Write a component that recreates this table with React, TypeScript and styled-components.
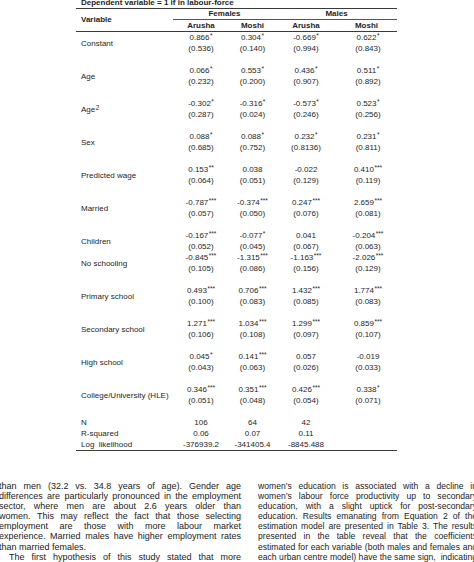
import React from "react";
import styled, { createGlobalStyle } from "styled-components";

const GlobalStyle = createGlobalStyle`
  html, body {
    margin: 0;
    padding: 0;
    background: #ffffff;
    overflow: hidden;
  }
`;

const Page = styled.div`
  width: 474px;
  height: 562px;
  overflow: hidden;
  font-family: "Liberation Sans", Arial, Helvetica, sans-serif;
  color: #262626;
`;

const TableWrap = styled.div`
  margin-left: 76px;
  margin-top: -3px;
  width: 321px;
`;

const Title = styled.div`
  font-size: 8px;
  font-weight: bold;
  line-height: 10px;
  padding-top: 1px;
  padding-left: 5px;
  border-bottom: 1.5px solid #3a3a3a;
  color: #1e1e1e;
`;

const Table = styled.table`
  width: 100%;
  border-collapse: collapse;
  table-layout: fixed;
  font-size: 8px;
`;

const HeadCell = styled.th<{ $left?: boolean; $rule?: "thin" | "thick" }>`
  padding: 0;
  padding-left: ${({ $left }) => ($left ? "5px" : "0")};
  text-align: ${({ $left }) => ($left ? "left" : "center")};
  vertical-align: middle;
  font-weight: bold;
  line-height: 11px;
  color: #1e1e1e;
  border-bottom: ${({ $rule }) =>
    $rule === "thin"
      ? "1px solid #555"
      : $rule === "thick"
      ? "1.5px solid #3a3a3a"
      : "none"};
`;

const GroupRow = styled.tr`
  height: 10px;
  th {
    line-height: 10px;
  }
`;

const Cell = styled.td<{ $left?: boolean; $tight?: boolean; $shift?: number }>`
  padding: 0 0 ${({ $tight }) => ($tight ? "0" : "11px")} 0;
  padding-left: ${({ $left, $shift }) => ($left ? "5px" : `${$shift ?? 0}px`)};
  text-align: ${({ $left }) => ($left ? "left" : "center")};
  vertical-align: middle;
  line-height: 11px;
  white-space: nowrap;
`;

const StatCell = styled.td<{ $left?: boolean; $last?: boolean; $shift?: number }>`
  padding: 0;
  padding-left: ${({ $left, $shift }) => ($left ? "5px" : `${$shift ?? 0}px`)};
  text-align: ${({ $left }) => ($left ? "left" : "center")};
  line-height: 11px;
  white-space: pre;
  border-bottom: ${({ $last }) => ($last ? "1.5px solid #3a3a3a" : "none")};
`;

const Line = styled.span`
  display: block;
  line-height: 11px;
`;

const Star = styled.sup`
  font-size: 6.5px;
  line-height: 0;
  vertical-align: 2px;
  margin-left: 0.5px;
`;

const Columns = styled.div`
  display: flex;
  gap: 17px;
  margin-left: -1px;
  margin-top: 30px;
`;

const Column = styled.div<{ $width: number; $size: number }>`
  width: ${({ $width }) => $width}px;
  flex-shrink: 0;
  font-size: ${({ $size }) => $size}px;
  line-height: 10.1px;
  color: #222;
`;

const TextLine = styled.div<{ $end?: boolean; $indent?: boolean }>`
  white-space: nowrap;
  text-align: justify;
  text-align-last: ${({ $end }) => ($end ? "left" : "justify")};
  text-indent: ${({ $indent }) => ($indent ? "10px" : "0")};
`;

type Coef = [string, string, string];

const rows: { label: React.ReactNode; vals: Coef[]; tight?: boolean }[] = [
  { label: "Constant", vals: [["0.866", "*", "(0.536)"], ["0.304", "*", "(0.140)"], ["-0.669", "*", "(0.994)"], ["0.622", "*", "(0.843)"]] },
  { label: "Age", vals: [["0.066", "*", "(0.232)"], ["0.553", "*", "(0.200)"], ["0.436", "*", "(0.907)"], ["0.511", "*", "(0.892)"]] },
  { label: <>Age<Star>2</Star></>, vals: [["-0.302", "*", "(0.287)"], ["-0.316", "*", "(0.024)"], ["-0.573", "*", "(0.246)"], ["0.523", "*", "(0.256)"]] },
  { label: "Sex", vals: [["0.088", "*", "(0.685)"], ["0.088", "*", "(0.752)"], ["0.232", "*", "(0.8136)"], ["0.231", "*", "(0.811)"]] },
  { label: "Predicted wage", vals: [["0.153", "**", "(0.064)"], ["0.038", "", "(0.051)"], ["-0.022", "", "(0.129)"], ["0.410", "***", "(0.119)"]] },
  { label: "Married", vals: [["-0.787", "***", "(0.057)"], ["-0.374", "***", "(0.050)"], ["0.247", "***", "(0.076)"], ["2.659", "***", "(0.081)"]] },
  { label: "Children", tight: true, vals: [["-0.167", "***", "(0.052)"], ["-0.077", "*", "(0.045)"], ["0.041", "", "(0.067)"], ["-0.204", "***", "(0.063)"]] },
  { label: "No schooling", vals: [["-0.845", "***", "(0.105)"], ["-1.315", "***", "(0.086)"], ["-1.163", "***", "(0.156)"], ["-2.026", "***", "(0.129)"]] },
  { label: "Primary school", vals: [["0.493", "***", "(0.100)"], ["0.706", "***", "(0.083)"], ["1.432", "***", "(0.085)"], ["1.774", "***", "(0.083)"]] },
  { label: "Secondary school", vals: [["1.271", "***", "(0.106)"], ["1.034", "***", "(0.108)"], ["1.299", "***", "(0.097)"], ["0.859", "***", "(0.107)"]] },
  { label: "High school", vals: [["0.045", "*", "(0.043)"], ["0.141", "***", "(0.063)"], ["0.057", "", "(0.026)"], ["-0.019", "", "(0.033)"]] },
  { label: "College/University (HLE)", vals: [["0.346", "***", "(0.051)"], ["0.351", "***", "(0.048)"], ["0.426", "***", "(0.054)"], ["0.338", "*", "(0.071)"]] },
];

const stats = [
  { label: "N", vals: ["106", "64", "42", ""] },
  { label: "R-squared", vals: ["0.06", "0.07", "0.11", ""] },
  { label: "Log\u00a0\u00a0likelihood", vals: ["-376939.2", "-341405.4", "-8845.488", ""] },
];

const shifts = [0, 0, 0, 3];

const leftText = [
  "than men (32.2 vs. 34.8 years of age). Gender age",
  "differences are particularly pronounced in the employment",
  "sector, where men are about 2.6 years older than",
  "women. This may reflect the fact that those selecting",
  "employment are those with more labour market",
  "experience. Married males have higher employment rates",
];

const rightText = [
  "women\u2019s education is associated with a decline in",
  "women\u2019s labour force productivity up to secondary",
  "education, with a slight uptick for post-secondary",
  "education. Results emanating from Equation 2 of the",
  "estimation model are presented in Table 3. The results",
  "presented in the table reveal that the coefficients",
  "estimated for each variable (both males and females and",
  "each urban centre model) have the same sign,\u00a0 indicating",
];

export default function App() {
  return (
    <>
      <GlobalStyle />
      <Page>
        <TableWrap>
          <Title>Dependent variable = 1 if in labour-force</Title>
          <Table>
            <colgroup>
              <col style={{ width: 97 }} />
              <col style={{ width: 56 }} />
              <col style={{ width: 47 }} />
              <col style={{ width: 60 }} />
              <col style={{ width: 61 }} />
            </colgroup>
            <thead>
              <GroupRow>
                <HeadCell $left rowSpan={2} $rule="thick">
                  Variable
                </HeadCell>
                <HeadCell colSpan={2} $rule="thin">
                  Females
                </HeadCell>
                <HeadCell colSpan={2} $rule="thin">
                  Males
                </HeadCell>
              </GroupRow>
              <tr>
                <HeadCell $rule="thick">Arusha</HeadCell>
                <HeadCell $rule="thick">Moshi</HeadCell>
                <HeadCell $rule="thick">Arusha</HeadCell>
                <HeadCell $rule="thick">Moshi</HeadCell>
              </tr>
            </thead>
            <tbody>
              {rows.map((r, i) => (
                <tr key={i}>
                  <Cell $left $tight={r.tight}>
                    {r.label}
                  </Cell>
                  {r.vals.map(([c, s, se], j) => (
                    <Cell key={j} $tight={r.tight} $shift={shifts[j]}>
                      <Line>
                        {c}
                        {s && <Star>{s}</Star>}
                      </Line>
                      <Line>{se}</Line>
                    </Cell>
                  ))}
                </tr>
              ))}
              {stats.map((s, i) => (
                <tr key={s.label}>
                  <StatCell $left $last={i === stats.length - 1}>
                    {s.label}
                  </StatCell>
                  {s.vals.map((v, j) => (
                    <StatCell key={j} $last={i === stats.length - 1} $shift={shifts[j]}>
                      {v}
                    </StatCell>
                  ))}
                </tr>
              ))}
            </tbody>
          </Table>
        </TableWrap>
        <Columns>
          <Column $width={242} $size={9}>
            {leftText.map((t) => (
              <TextLine key={t}>{t}</TextLine>
            ))}
            <TextLine $end>than married females.</TextLine>
            <TextLine $indent>The first hypothesis of this study stated that more</TextLine>
          </Column>
          <Column $width={219} $size={8.6}>
            {rightText.map((t) => (
              <TextLine key={t}>{t}</TextLine>
            ))}
          </Column>
        </Columns>
      </Page>
    </>
  );
}
